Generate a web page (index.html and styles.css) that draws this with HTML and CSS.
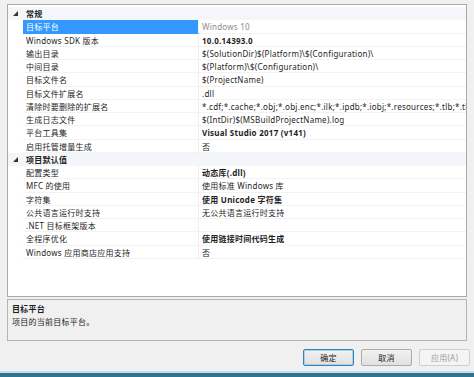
FILE: index.html
```html
<!DOCTYPE html>
<html lang="zh-CN">
<head>
<meta charset="utf-8">
<title>属性页</title>
<link rel="stylesheet" href="styles.css">
</head>
<body>
<div class="window">
  <div class="grid">
    <div class="cat"><span class="gutter"><svg class="tri" width="5" height="5" viewBox="0 0 5 5"><polygon points="5,0 5,5 0,5" fill="#333"/></svg></span><span class="cat-name">常规</span></div>
    <div class="row sel"><span class="gutter"></span><span class="name">目标平台</span><span class="val dim">Windows 10</span></div>
    <div class="row"><span class="gutter"></span><span class="name">Windows SDK 版本</span><span class="val b">10.0.14393.0</span></div>
    <div class="row"><span class="gutter"></span><span class="name">输出目录</span><span class="val">$(SolutionDir)$(Platform)\$(Configuration)\</span></div>
    <div class="row"><span class="gutter"></span><span class="name">中间目录</span><span class="val">$(Platform)\$(Configuration)\</span></div>
    <div class="row"><span class="gutter"></span><span class="name">目标文件名</span><span class="val">$(ProjectName)</span></div>
    <div class="row"><span class="gutter"></span><span class="name">目标文件扩展名</span><span class="val">.dll</span></div>
    <div class="row"><span class="gutter"></span><span class="name">清除时要删除的扩展名</span><span class="val">*.cdf;*.cache;*.obj;*.obj.enc;*.ilk;*.ipdb;*.iobj;*.resources;*.tlb;*.tli;*.t</span></div>
    <div class="row"><span class="gutter"></span><span class="name">生成日志文件</span><span class="val">$(IntDir)$(MSBuildProjectName).log</span></div>
    <div class="row"><span class="gutter"></span><span class="name">平台工具集</span><span class="val b">Visual Studio 2017 (v141)</span></div>
    <div class="row"><span class="gutter"></span><span class="name">启用托管增量生成</span><span class="val">否</span></div>
    <div class="cat"><span class="gutter"><svg class="tri" width="5" height="5" viewBox="0 0 5 5"><polygon points="5,0 5,5 0,5" fill="#333"/></svg></span><span class="cat-name">项目默认值</span></div>
    <div class="row"><span class="gutter"></span><span class="name">配置类型</span><span class="val b">动态库(.dll)</span></div>
    <div class="row"><span class="gutter"></span><span class="name">MFC 的使用</span><span class="val">使用标准 Windows 库</span></div>
    <div class="row"><span class="gutter"></span><span class="name">字符集</span><span class="val b">使用 Unicode 字符集</span></div>
    <div class="row"><span class="gutter"></span><span class="name">公共语言运行时支持</span><span class="val">无公共语言运行时支持</span></div>
    <div class="row"><span class="gutter"></span><span class="name">.NET 目标框架版本</span><span class="val"></span></div>
    <div class="row"><span class="gutter"></span><span class="name">全程序优化</span><span class="val b">使用链接时间代码生成</span></div>
    <div class="row"><span class="gutter"></span><span class="name">Windows 应用商店应用支持</span><span class="val">否</span></div>
  </div>
  <div class="desc">
    <div class="desc-title">目标平台</div>
    <div class="desc-text">项目的当前目标平台。</div>
  </div>
  <div class="buttons">
    <button class="btn default">确定</button>
    <button class="btn">取消</button>
    <button class="btn disabled">应用(A)</button>
  </div>
  <div class="frame-bottom"></div>
</div>
</body>
</html>
```
FILE: styles.css
```css
html, body {
  margin: 0;
  padding: 0;
}
body {
  width: 474px;
  height: 377px;
  overflow: hidden;
  background: #f0f0f0;
  font-family: "Noto Sans", "Noto Sans CJK SC", sans-serif;
  font-size: 8px;
  letter-spacing: 0.25px;
  color: #1e1e1e;
}
.window {
  display: flex;
  flex-direction: column;
  height: 377px;
  padding-top: 4px;
  box-sizing: border-box;
}
.grid {
  margin: 0 7px;
  height: 293px;
  box-sizing: border-box;
  background: #fff;
  border: 1px solid #a9a9a9;
  padding-top: 2px;
  overflow: hidden;
}
.row, .cat {
  display: flex;
  height: 13.25px;
  line-height: 13px;
  white-space: nowrap;
}
.cat {
  background: #f4f6f9;
}
.gutter {
  width: 15px;
  flex: none;
  display: flex;
  align-items: center;
  justify-content: center;
}
.tri {
  display: block;
}
.cat-name {
  font-weight: bold;
  padding-left: 3px;
}
.name {
  width: 176px;
  flex: none;
  padding-left: 3px;
  box-sizing: border-box;
  border-bottom: 1px solid #f3f3f3;
  border-right: 1px solid #f0f0f0;
  overflow: hidden;
}
.val {
  flex: 1;
  min-width: 0;
  padding-left: 3px;
  border-bottom: 1px solid #f3f3f3;
  overflow: hidden;
}
.row .name, .row .val {
  height: 13.25px;
  box-sizing: border-box;
}
.b {
  font-weight: bold;
}
.sel .name {
  background: #3399ff;
  color: #fff;
  border-bottom-color: #3399ff;
}
.dim {
  color: #8c8c8c;
}
.desc {
  margin: 2px 7px 0;
  height: 42px;
  box-sizing: border-box;
  border: 1px solid #b4b4b4;
  padding: 2px 4px;
  line-height: 13px;
}
.desc-title {
  font-weight: bold;
}
.buttons {
  display: flex;
  justify-content: flex-end;
  gap: 7px;
  padding: 8px 4px 0 0;
  height: 17px;
}
.btn {
  width: 51px;
  height: 17px;
  padding: 0;
  font-family: inherit;
  font-size: 8px;
  letter-spacing: 0.25px;
  color: #1e1e1e;
  border: 1px solid #acacac;
  border-radius: 2px;
  background: linear-gradient(#f2f2f2, #e0e0e0);
}
.btn.default {
  border-color: #3c7fb1;
  box-shadow: inset 0 0 0 1px #9fd5f3;
}
.btn.disabled {
  color: #a0a0a0;
  border-color: #cfcfcf;
  background: #f4f4f4;
}
.frame-bottom {
  margin-top: auto;
  height: 4px;
  border-top: 2px solid #c9dcea;
  background: #2f7393;
}
```
